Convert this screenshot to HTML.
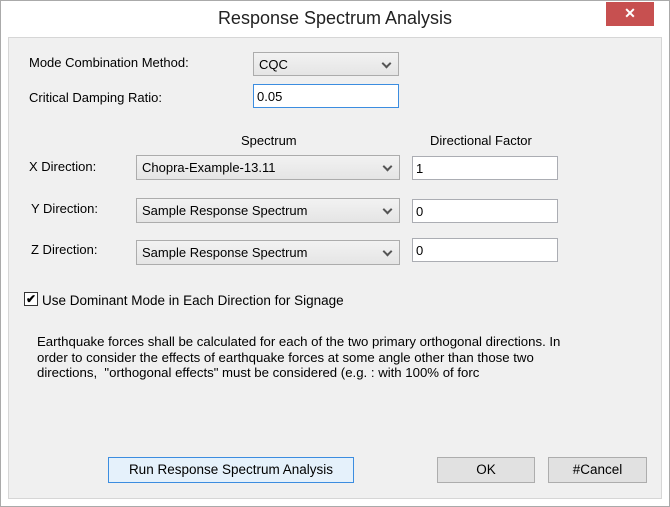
<!DOCTYPE html>
<html><head><style>
*{box-sizing:border-box;margin:0;padding:0}
body{width:670px;height:507px;background:#fff;font-family:"Liberation Sans",sans-serif;font-size:13px;color:#000;position:relative;overflow:hidden}
.frame{position:absolute;left:0;top:0;width:670px;height:507px;border:1px solid #aaa;background:#fff}
.title{position:absolute;left:0;width:670px;top:8px;text-align:center;font-size:18px;color:#222}
.close{position:absolute;left:606px;top:2px;width:48px;height:24px;background:#c75050;color:#fff;text-align:center;font-size:14px;line-height:23px;font-weight:bold}
.panel{position:absolute;left:8px;top:37px;width:654px;height:462px;background:#f0f0f0;border:1px solid #d6d6d6}
.t{position:absolute;white-space:nowrap}
.combo{position:absolute;background:linear-gradient(#f2f2f2,#e5e5e5);border:1px solid #acacac;padding:4px 5px;font-size:13px}
.combo:after{content:"";position:absolute;right:8px;top:7px;width:5px;height:5px;border-right:2px solid #555;border-bottom:2px solid #555;transform:rotate(45deg)}
.inp{position:absolute;background:#fff;border:1px solid #abadb3;padding:4px 3px;font-size:13px}
.btn{position:absolute;background:#e1e1e1;border:1px solid #adadad;text-align:center;line-height:24px;font-size:13.5px}
</style></head><body>
<div class="frame"></div>
<div class="title">Response Spectrum Analysis</div>
<div class="close">✕</div>
<div class="panel"></div>
<div class="t" style="left:29px;top:55px">Mode Combination Method:</div>
<div class="combo" style="left:253px;top:52px;width:146px;height:24px">CQC</div>
<div class="t" style="left:29px;top:90px">Critical Damping Ratio:</div>
<div class="inp" style="left:253px;top:84px;width:146px;height:24px;border-color:#3c8de0">0.05</div>
<div class="t" style="left:241px;top:133px">Spectrum</div>
<div class="t" style="left:430px;top:133px">Directional Factor</div>
<div class="t" style="left:29px;top:159px">X Direction:</div>
<div class="combo" style="left:136px;top:155px;width:264px;height:25px">Chopra-Example-13.11</div>
<div class="inp" style="left:412px;top:156px;width:146px;height:24px">1</div>
<div class="t" style="left:31px;top:201px">Y Direction:</div>
<div class="combo" style="left:136px;top:198px;width:264px;height:25px">Sample Response Spectrum</div>
<div class="inp" style="left:412px;top:199px;width:146px;height:24px">0</div>
<div class="t" style="left:31px;top:242px">Z Direction:</div>
<div class="combo" style="left:136px;top:240px;width:264px;height:25px">Sample Response Spectrum</div>
<div class="inp" style="left:412px;top:238px;width:146px;height:24px">0</div>
<div style="position:absolute;left:24px;top:292px;width:14px;height:14px;background:#fff;border:1px solid #333;font-size:12px;line-height:12px;text-align:center;font-weight:bold">✔</div>
<div class="t" style="left:42px;top:293px;font-size:13.5px">Use Dominant Mode in Each Direction for Signage</div>
<div class="t" style="left:37px;top:334px;line-height:15.5px;font-size:13.2px">Earthquake forces shall be calculated for each of the two primary orthogonal directions. In<br>order to consider the effects of earthquake forces at some angle other than those two<br>directions,&nbsp; "orthogonal effects" must be considered (e.g. : with 100% of forc</div>
<div class="btn" style="left:108px;top:457px;width:246px;height:26px;border-color:#3c8de0;background:#e5f1fb">Run Response Spectrum Analysis</div>
<div class="btn" style="left:437px;top:457px;width:98px;height:26px">OK</div>
<div class="btn" style="left:548px;top:457px;width:99px;height:26px">#Cancel</div>
</body></html>
